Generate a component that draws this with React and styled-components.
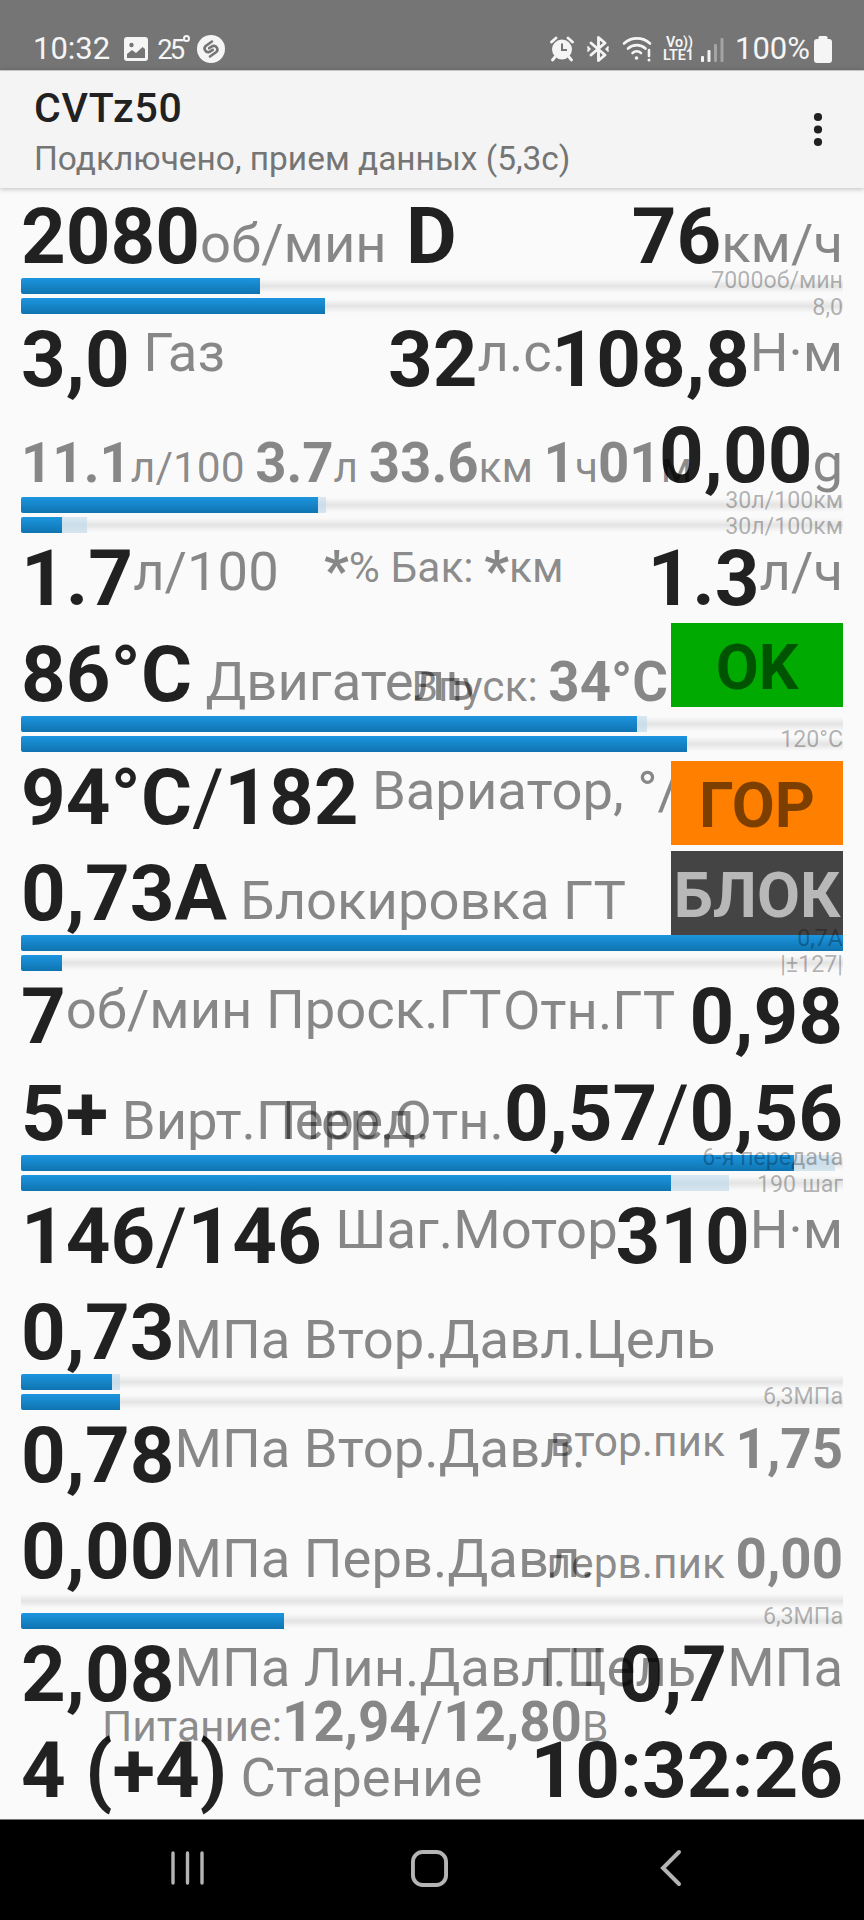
import React from "react";
import styled, { createGlobalStyle } from "styled-components";

const GlobalStyle = createGlobalStyle`
  body { margin: 0; background: #fafafa; }
  * { box-sizing: border-box; }
`;

const Screen = styled.div`
  width: 864px;
  height: 1920px;
  display: flex;
  flex-direction: column;
  overflow: hidden;
  background: #fafafa;
  font-family: Roboto, "Liberation Sans", sans-serif;
`;

const StatusBar = styled.header`
  height: 70px;
  padding: 27px 32px 0 33px;
  display: flex;
  justify-content: space-between;
  background: #757575;
  color: #f5f5f5;
`;

const StatusGroup = styled.div`
  height: 44px;
  display: flex;
  align-items: center;
`;

const StatusText = styled.span`
  font-size: ${(p) => p.$size}px;
  line-height: 40px;
  letter-spacing: ${(p) => p.$spacing || 0}px;
  margin-left: ${(p) => p.$gap || 0}px;
  padding-top: ${(p) => p.$drop || 0}px;
`;

const StatusIcon = styled.svg`
  display: block;
  flex: none;
  margin-left: ${(p) => p.$gap}px;
`;

const Degree = styled.i`
  width: 7px;
  height: 7px;
  margin: -22px 0 0 0;
  border: 2px solid #f5f5f5;
  border-radius: 50%;
`;

const Network = styled.span`
  display: flex;
  flex-direction: column;
  margin-left: 11px;
  font-size: 14.3px;
  font-weight: 600;
  line-height: 13.5px;
  white-space: nowrap;
`;

const NetworkLine = styled.span`
  padding-left: ${(p) => p.$inset || 0}px;
`;

const AppBar = styled.div`
  position: relative;
  z-index: 1;
  height: 118px;
  padding: 14px 38px 0 34px;
  display: flex;
  justify-content: space-between;
  background: #f4f4f4;
  border-top: 1px solid #c4c4c4;
  box-shadow: 0 1px 5px rgba(0, 0, 0, 0.25);
`;

const Titles = styled.div`
  display: flex;
  flex-direction: column;
`;

const Title = styled.h1`
  margin: 0;
  font-size: 41px;
  letter-spacing: 0.7px;
  font-weight: 500;
  line-height: 47px;
  color: #212121;
`;

const Subtitle = styled.p`
  margin: 7px 0 0;
  font-size: 33.45px;
  line-height: 40px;
  color: #757575;
`;

const MenuIcon = styled.svg`
  margin-top: 26px;
`;

const Dashboard = styled.main`
  flex: none;
  height: 1632px;
  padding: 6px 21px 0;
  border-bottom: 1px solid #777;
`;

const Group = styled.section`
  height: 219.15px;
`;

const Row = styled.div`
  display: grid;
  height: ${(p) => (p.$lower ? 99.15 : 84)}px;
  padding-top: ${(p) => (p.$lower ? 4 : 1)}px;
`;

const Item = styled.div`
  grid-area: 1 / 1;
  justify-self: ${(p) => (p.$right === undefined ? "start" : "end")};
  margin: ${(p) => `${-(p.$raise || 0)}px ${p.$right || 0}px 0 ${p.$left || 0}px`};
  font-size: 78px;
  line-height: 84px;
  height: 84px;
  white-space: pre;
`;

const Value = styled.b`
  font-size: 78px;
  line-height: 0;
  font-weight: 700;
  color: rgba(0, 0, 0, 0.87);
`;

const Divider = styled(Value)`
  font-weight: 400;
`;

const Unit = styled.span`
  font-size: 54.4px;
  line-height: 0;
  margin-right: ${(p) => p.$gap || 0}px;
  color: rgba(0, 0, 0, 0.46);
  vertical-align: ${(p) => (p.$top ? 14.7 : 1)}px;
`;

const Note = styled.span`
  font-size: ${(p) => p.$size || 42.5}px;
  line-height: 0;
  color: rgba(0, 0, 0, 0.46);
  vertical-align: ${(p) => p.$lift || 0}px;
`;

const NoteValue = styled(Note)`
  font-size: 54.6px;
  font-weight: 700;
`;

const Badge = styled.div`
  grid-area: 1 / 1;
  justify-self: end;
  width: 172px;
  height: 84px;
  margin-top: ${(p) => p.$shift}px;
  font-size: 62.4px;
  font-weight: 700;
  line-height: 90px;
  text-align: center;
  white-space: nowrap;
  background: ${(p) => p.$fill};
  color: ${(p) => (p.$light ? "rgba(255,255,255,0.62)" : "rgba(0,0,0,0.51)")};
`;

const Meters = styled.div`
  position: relative;
  display: grid;
  height: 36px;
`;

const Bars = styled.div`
  grid-area: 1 / 1;
  display: flex;
  flex-direction: column;
  gap: 4px;
`;

const Track = styled.div`
  display: grid;
  height: 16px;
  background: linear-gradient(rgba(0, 0, 0, 0) 5%, rgba(0, 0, 0, 0.09) 50%, rgba(0, 0, 0, 0) 95%);
`;

const Fill = styled.i`
  grid-area: 1 / 1;
  width: ${(p) => p.$width}px;
  border-radius: 2px 0 0 2px;
  background: linear-gradient(#1c95df, #0f74b0);
`;

const Secondary = styled(Fill)`
  background: linear-gradient(#d9e8f2, #cadde9 50%, #d6e5ef);
`;

const Limits = styled.div`
  grid-area: 1 / 1;
  justify-self: end;
  height: 0;
  margin-top: ${(p) => (p.$single ? 9.7 : -10.6)}px;
  font-size: 23.2px;
  line-height: 26.6px;
  text-align: right;
  color: rgba(0, 0, 0, 0.3);
`;

const NavBar = styled.nav`
  flex: 1;
  display: flex;
  align-items: center;
  justify-content: space-between;
  padding: 0 181px 4px 170px;
  background: #000;
`;

const HomeIcon = styled.svg`
  margin-right: 7px;
`;

const Meter = ({ value, peak }) => (
  <Track>
    {peak ? <Secondary $width={peak} /> : null}
    {value ? <Fill $width={value} /> : null}
  </Track>
);

const MeterPair = ({ first, second, limits }) => (
  <Meters>
    <Bars>
      <Meter value={first[0]} peak={first[1]} />
      <Meter value={second[0]} peak={second[1]} />
    </Bars>
    <Limits $single={limits.length === 1}>
      {limits.map((l, i) => (
        <div key={i}>{l}</div>
      ))}
    </Limits>
  </Meters>
);

const PhoneStatus = () => (
  <StatusBar>
    <StatusGroup>
      <StatusText $size={31}>10:32</StatusText>
      <StatusIcon $gap={14} width="24" height="24" viewBox="0 0 24 24">
        <rect width="24" height="24" rx="3" fill="#f5f5f5" />
        <circle cx="7.5" cy="8" r="2.2" fill="#757575" />
        <path d="M3 18.5V17l5-4 4 3 6.5-6L21 12v9H3z" fill="#757575" />
      </StatusIcon>
      <StatusText $size={27.5} $gap={9} $spacing={-2.8} $drop={2}>25</StatusText>
      <Degree />
      <StatusIcon $gap={7} width="28" height="28" viewBox="0 0 28 28">
        <circle cx="14" cy="14" r="14" fill="#f5f5f5" />
        <path d="M15 6.5l-6 4.2a3.6 3.6 0 0 0 3.2 6.3l3.6-2.2M13 21.5l6-4.2a3.6 3.6 0 0 0-3.2-6.3l-3.6 2.2" fill="none" stroke="#757575" strokeWidth="2.6" strokeLinecap="round" />
      </StatusIcon>
    </StatusGroup>
    <StatusGroup>
      <StatusIcon $gap={0} width="24" height="26" viewBox="0 0 24 26">
        <circle cx="12" cy="13.5" r="10" fill="#f5f5f5" />
        <path d="M1.5 6l4.5-4M22.5 6L18 2M5 21l-2.5 3M19 21l2.5 3" stroke="#f5f5f5" strokeWidth="2.8" strokeLinecap="round" />
        <path d="M12 7.5V14h5" fill="none" stroke="#757575" strokeWidth="2" />
      </StatusIcon>
      <StatusIcon $gap={12} width="24" height="28" viewBox="0 0 24 28">
        <path d="M5 8l14 12-6.5 5.5V2.5L19 8 5 20" fill="none" stroke="#f5f5f5" strokeWidth="2.9" strokeLinejoin="round" strokeLinecap="round" />
        <path d="M1.5 11.5l2.5 2.5-2.5 2.5M22.5 11.5L20 14l2.5 2.5" fill="#f5f5f5" stroke="#f5f5f5" strokeWidth="1.5" />
      </StatusIcon>
      <StatusIcon $gap={12} width="30" height="26" viewBox="0 0 30 26">
        <g fill="none" stroke="#f5f5f5" strokeWidth="2.6" strokeLinecap="round">
          <path d="M2 7.5a19 19 0 0 1 26 0M6 12.500a13 13 0 0 1 17.500 0M10.500 17a6.500 6.500 0 0 1 8.500 0" />
          <path d="M27 14v6" />
        </g>
        <circle cx="14.5" cy="22" r="1.8" fill="#f5f5f5" />
        <circle cx="27" cy="24" r="1.5" fill="#f5f5f5" />
      </StatusIcon>
      <Network>
        <NetworkLine $inset={3}>Vo))</NetworkLine>
        <NetworkLine>LTE1</NetworkLine>
      </Network>
      <StatusIcon $gap={7} width="23" height="25" viewBox="0 0 23 25">
        <rect x="0" y="19" width="3" height="6" rx="1" fill="#f5f5f5" />
        <rect x="6.5" y="13" width="3" height="12" rx="1" fill="#f5f5f5" />
        <rect x="13" y="7" width="3" height="18" rx="1" fill="#a4a4a4" />
        <rect x="19.5" y="1" width="3" height="24" rx="1" fill="#a4a4a4" />
      </StatusIcon>
      <StatusText $size={31} $gap={11}>100%</StatusText>
      <StatusIcon $gap={4} width="18" height="27" viewBox="0 0 18 27">
        <rect x="4.5" width="9" height="6" rx="1.5" fill="#f5f5f5" />
        <rect y="3" width="18" height="24" rx="3" fill="#f5f5f5" />
      </StatusIcon>
    </StatusGroup>
  </StatusBar>
);

export default function App() {
  return (
    <Screen>
      <GlobalStyle />
      <PhoneStatus />
      <AppBar>
        <Titles>
          <Title>CVTz50</Title>
          <Subtitle>Подключено, прием данных (5,3с)</Subtitle>
        </Titles>
        <MenuIcon width="16" height="40" viewBox="0 0 16 40" fill="#212121">
          <circle cx="8" cy="6" r="4.1" />
          <circle cx="8" cy="18.5" r="4.1" />
          <circle cx="8" cy="31" r="4.1" />
        </MenuIcon>
      </AppBar>

      <Dashboard>
        <Group>
          <Row>
            <Item><Value>2080</Value><Unit>об/мин</Unit><Value> D</Value></Item>
            <Item $right={0}><Value>76</Value><Unit>км/ч</Unit></Item>
          </Row>
          <MeterPair first={[239]} second={[304.3]} limits={["7000об/мин", "8,0"]} />
          <Row $lower>
            <Item><Value>3,0</Value><Unit $top> Газ</Unit></Item>
            <Item $left={367}><Value>32</Value><Unit $top>л.с.</Unit></Item>
            <Item $right={0}><Value>108,8</Value><Unit $top>Н·м</Unit></Item>
          </Row>
        </Group>

        <Group>
          <Row>
            <Item>
              <NoteValue>11.1</NoteValue><Note>л/100 </Note>
              <NoteValue>3.7</NoteValue><Note>л </Note>
              <NoteValue>33.6</NoteValue><Note>км </Note>
              <NoteValue>1</NoteValue><Note>ч</Note>
              <NoteValue>01</NoteValue><Note>м</Note>
            </Item>
            <Item $right={0}><Value>0,00</Value><Unit>g</Unit></Item>
          </Row>
          <MeterPair first={[296.7, 304.7]} second={[41.3, 66]} limits={["30л/100км", "30л/100км"]} />
          <Row $lower>
            <Item><Value>1.7</Value><Unit $top>л/100</Unit></Item>
            <Item $left={303} $raise={23}>
              <NoteValue $lift={-8}>*</NoteValue><Note>% Бак: </Note>
              <NoteValue $lift={-8}>*</NoteValue><Note>км</Note>
            </Item>
            <Item $right={0}><Value>1.3</Value><Unit $top>л/ч</Unit></Item>
          </Row>
        </Group>

        <Group>
          <Row>
            <Item><Value>86°C</Value><Unit> Двигатель</Unit></Item>
            <Item $right={175}><Note>Впуск: </Note><NoteValue>34°C</NoteValue></Item>
            <Badge $shift={-10} $fill="#00aa00">OK</Badge>
          </Row>
          <MeterPair first={[616.3, 625.7]} second={[666]} limits={["120°C"]} />
          <Row $lower>
            <Item><Value>94°C</Value><Divider>/</Divider><Value>182</Value><Unit $top> Вариатор, °/</Unit></Item>
            <Badge $shift={4.4} $fill="#ff8000">ГОР</Badge>
          </Row>
        </Group>

        <Group>
          <Row>
            <Item><Value>0,73A</Value><Unit> Блокировка ГТ</Unit></Item>
            <Badge $shift={-1} $fill="#444444" $light>БЛОК</Badge>
          </Row>
          <MeterPair first={[822]} second={[41.3]} limits={["0,7А", "|±127|"]} />
          <Row $lower>
            <Item><Value>7</Value><Unit $top>об/мин Проск.ГТ</Unit></Item>
            <Item $right={0}><Unit $top $gap={2}>Отн.ГТ </Unit><Value>0,98</Value></Item>
          </Row>
        </Group>

        <Group>
          <Row>
            <Item><Value>5+</Value><Unit> Вирт.Перед.</Unit></Item>
            <Item $right={0}><Unit>Пер.Отн.</Unit><Value>0,57</Value><Divider>/</Divider><Value>0,56</Value></Item>
          </Row>
          <MeterPair first={[773.3, 814.3]} second={[650, 707.7]} limits={["6-я передача", "190 шаг"]} />
          <Row $lower>
            <Item><Value>146</Value><Divider>/</Divider><Value>146</Value><Unit $top> Шаг.Мотор</Unit></Item>
            <Item $right={0}><Value>310</Value><Unit $top>Н·м</Unit></Item>
          </Row>
        </Group>

        <Group>
          <Row>
            <Item><Value>0,73</Value><Unit>МПа Втор.Давл.Цель</Unit></Item>
          </Row>
          <MeterPair first={[91, 99]} second={[99]} limits={["6,3МПа"]} />
          <Row $lower>
            <Item><Value>0,78</Value><Unit $top>МПа Втор.Давл.</Unit></Item>
            <Item $right={0} $raise={14}><Note $lift={12.5}>втор.пик </Note><NoteValue>1,75</NoteValue></Item>
          </Row>
        </Group>

        <Group>
          <Row>
            <Item><Value>0,00</Value><Unit>МПа Перв.Давл.</Unit></Item>
            <Item $right={0}><Note>перв.пик </Note><NoteValue>0,00</NoteValue></Item>
          </Row>
          <MeterPair first={[0]} second={[263]} limits={["6,3МПа"]} />
          <Row $lower>
            <Item><Value>2,08</Value><Unit $top>МПа Лин.Давл.Цель</Unit></Item>
            <Item $right={0}><Unit $top $gap={1}>ГТ </Unit><Value>0,7</Value><Unit $top>МПа</Unit></Item>
          </Row>
        </Group>

        <Row>
          <Item $left={81} $raise={56}>
            <Note>Питание:</Note><NoteValue>12,94</NoteValue><Note $size={54.6}>/</Note><NoteValue>12,80</NoteValue><Note>В</Note>
          </Item>
          <Item><Value>4 (+4)</Value><Unit> Старение</Unit></Item>
          <Item $right={0}><Value>10:32:26</Value></Item>
        </Row>
      </Dashboard>

      <NavBar>
        <svg width="36" height="36" viewBox="0 0 36 36" stroke="#b4b4b4" strokeWidth="3.4" strokeLinecap="round">
          <path d="M3 3v30M17.5 3v30M32 3v30" />
        </svg>
        <HomeIcon width="37" height="37" viewBox="0 0 38 38" fill="none" stroke="#b4b4b4" strokeWidth="4">
          <rect x="2" y="2" width="34" height="34" rx="10" />
        </HomeIcon>
        <svg width="24" height="38" viewBox="0 0 24 38" fill="none" stroke="#b4b4b4" strokeWidth="4" strokeLinecap="round" strokeLinejoin="miter">
          <path d="M20 3L4 19l16 16" />
        </svg>
      </NavBar>
    </Screen>
  );
}
